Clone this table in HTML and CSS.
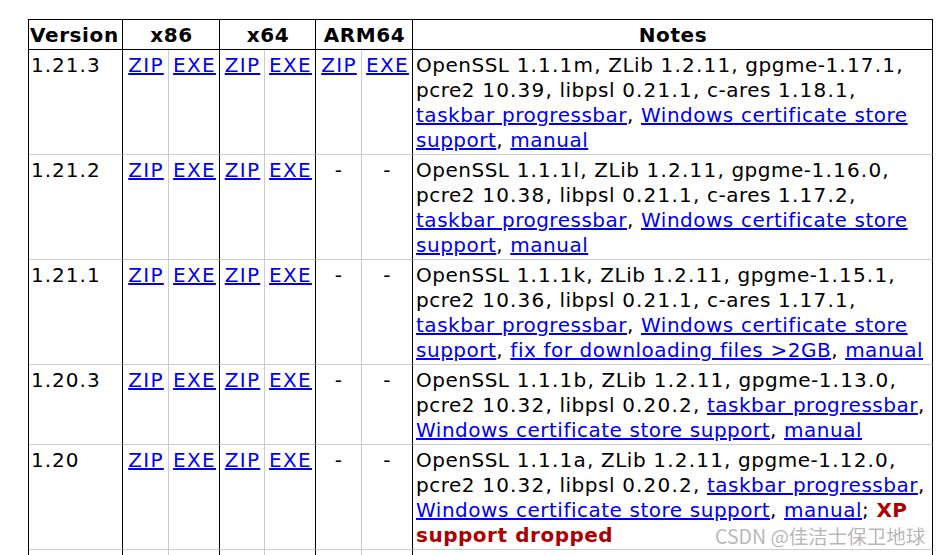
FILE: index.html
```html
<!DOCTYPE html>
<html lang="en">
<head>
<meta charset="utf-8">
<title>Wget2 releases</title>
<link rel="stylesheet" href="styles.css">
</head>
<body>
<div class="page">
  <table class="releases">
    <colgroup>
      <col class="c-ver">
      <col class="c-zip">
      <col class="c-exe">
      <col class="c-zip2">
      <col class="c-exe">
      <col class="c-zip">
      <col class="c-exe">
      <col class="c-notes">
    </colgroup>
    <thead>
      <tr>
        <th class="h-ver">Version</th>
        <th colspan="2">x86</th>
        <th colspan="2">x64</th>
        <th colspan="2">ARM64</th>
        <th>Notes</th>
      </tr>
    </thead>
    <tbody>
      <tr>
        <td class="ver">1.21.3</td>
        <td class="dl"><a href="#">ZIP</a></td>
        <td class="dl grp-end"><a href="#">EXE</a></td>
        <td class="dl"><a href="#">ZIP</a></td>
        <td class="dl grp-end"><a href="#">EXE</a></td>
        <td class="dl"><a href="#">ZIP</a></td>
        <td class="dl grp-end"><a href="#">EXE</a></td>
        <td class="notes">OpenSSL <span class="v">1.1.1m</span>, ZLib <span class="v">1.2.11</span>, gpgme-<span class="v">1.17.1</span>, pcre2 <span class="v">10.39</span>, libpsl <span class="v">0.21.1</span>, c-ares <span class="v">1.18.1</span>, <a href="#">taskbar progressbar</a>, <a href="#">Windows certificate store support</a>, <a href="#">manual</a></td>
      </tr>
      <tr>
        <td class="ver">1.21.2</td>
        <td class="dl"><a href="#">ZIP</a></td>
        <td class="dl grp-end"><a href="#">EXE</a></td>
        <td class="dl"><a href="#">ZIP</a></td>
        <td class="dl grp-end"><a href="#">EXE</a></td>
        <td class="dl">-</td>
        <td class="dl grp-end">-</td>
        <td class="notes">OpenSSL <span class="v">1.1.1l</span>, ZLib <span class="v">1.2.11</span>, gpgme-<span class="v">1.16.0</span>, pcre2 <span class="v">10.38</span>, libpsl <span class="v">0.21.1</span>, c-ares <span class="v">1.17.2</span>, <a href="#">taskbar progressbar</a>, <a href="#">Windows certificate store support</a>, <a href="#">manual</a></td>
      </tr>
      <tr>
        <td class="ver">1.21.1</td>
        <td class="dl"><a href="#">ZIP</a></td>
        <td class="dl grp-end"><a href="#">EXE</a></td>
        <td class="dl"><a href="#">ZIP</a></td>
        <td class="dl grp-end"><a href="#">EXE</a></td>
        <td class="dl">-</td>
        <td class="dl grp-end">-</td>
        <td class="notes">OpenSSL <span class="v">1.1.1k</span>, ZLib <span class="v">1.2.11</span>, gpgme-<span class="v">1.15.1</span>, pcre2 <span class="v">10.36</span>, libpsl <span class="v">0.21.1</span>, c-ares <span class="v">1.17.1</span>, <a href="#">taskbar progressbar</a>, <a href="#">Windows certificate store support</a>, <a href="#">fix for downloading files &gt;2GB</a>, <a href="#">manual</a></td>
      </tr>
      <tr>
        <td class="ver">1.20.3</td>
        <td class="dl"><a href="#">ZIP</a></td>
        <td class="dl grp-end"><a href="#">EXE</a></td>
        <td class="dl"><a href="#">ZIP</a></td>
        <td class="dl grp-end"><a href="#">EXE</a></td>
        <td class="dl">-</td>
        <td class="dl grp-end">-</td>
        <td class="notes">OpenSSL <span class="v">1.1.1b</span>, ZLib <span class="v">1.2.11</span>, gpgme-<span class="v">1.13.0</span>, pcre2 <span class="v">10.32</span>, libpsl <span class="v">0.20.2</span>, <a href="#">taskbar progressbar</a>, <a href="#">Windows certificate store support</a>, <a href="#">manual</a></td>
      </tr>
      <tr>
        <td class="ver">1.20</td>
        <td class="dl"><a href="#">ZIP</a></td>
        <td class="dl grp-end"><a href="#">EXE</a></td>
        <td class="dl"><a href="#">ZIP</a></td>
        <td class="dl grp-end"><a href="#">EXE</a></td>
        <td class="dl">-</td>
        <td class="dl grp-end">-</td>
        <td class="notes">OpenSSL <span class="v">1.1.1a</span>, ZLib <span class="v">1.2.11</span>, gpgme-<span class="v">1.12.0</span>, pcre2 <span class="v">10.32</span>, libpsl <span class="v">0.20.2</span>, <a href="#">taskbar progressbar</a>, <a href="#">Windows certificate store support</a>, <a href="#">manual</a>; <strong class="warn">XP support dropped</strong></td>
      </tr>
      <tr>
        <td class="ver">1.19.4</td>
        <td class="dl"><a href="#">ZIP</a></td>
        <td class="dl grp-end"><a href="#">EXE</a></td>
        <td class="dl"><a href="#">ZIP</a></td>
        <td class="dl grp-end"><a href="#">EXE</a></td>
        <td class="dl">-</td>
        <td class="dl grp-end">-</td>
        <td class="notes">OpenSSL <span class="v">1.1.0i</span>, ZLib <span class="v">1.2.11</span>, gpgme-<span class="v">1.11.1</span>, pcre2 <span class="v">10.32</span>, libpsl <span class="v">0.20.2</span>, <a href="#">taskbar progressbar</a>, <a href="#">manual</a></td>
      </tr>
    </tbody>
  </table>
</div>
<div class="watermark">CSDN @佳洁士保卫地球</div>
</body>
</html>
```

FILE: styles.css
```css
html, body {
  margin: 0;
  overflow: hidden;
  background: #fff;
}

body {
  font-family: "DejaVu Sans", Verdana, sans-serif;
  font-size: 20px;
  line-height: 25px;
  color: #000;
}

.page {
  padding: 19px 0 0 28px;
}

a {
  color: #0000ee;
}

.releases {
  border-collapse: separate;
  border-spacing: 0;
  table-layout: fixed;
  width: 905px;
  border-left: 1px solid #000;
  border-top: 1px solid #000;
  letter-spacing: 0.5px;
  word-spacing: 0.3px;
}

.c-ver { width: 94px; }
.c-zip { width: 46px; }
.c-zip2 { width: 45px; }
.c-exe { width: 51px; }
.c-notes { width: 520px; }

.releases th,
.releases td {
  padding: 3px 1px 1px 2px;
  vertical-align: top;
  text-align: left;
  border-right: 1px solid #ccc;
  border-bottom: 1px solid #ccc;
}

.releases th {
  font-weight: bold;
  text-align: center;
  letter-spacing: 0.6px;
  border-right-color: #000;
  border-bottom-color: #000;
}

.releases th.h-ver {
  text-align: left;
  padding-left: 1px;
}

.releases td.ver {
  letter-spacing: 1px;
}

.releases td.dl {
  text-align: center;
  padding-left: 1px;
  padding-right: 0;
  letter-spacing: 1.3px;
}

.releases td.notes {
  padding-left: 3px;
  padding-right: 0;
}

.v {
  letter-spacing: 1.2px;
}

.releases td.ver,
.releases td.grp-end,
.releases td.notes {
  border-right-color: #000;
}

.warn {
  color: #aa0000;
}

.watermark {
  position: absolute;
  left: 715px;
  top: 523px;
  font-family: "Noto Sans CJK SC", "Noto Sans", sans-serif;
  font-size: 19.5px;
  line-height: 26px;
  color: rgba(120, 120, 120, 0.55);
  white-space: nowrap;
}
```
